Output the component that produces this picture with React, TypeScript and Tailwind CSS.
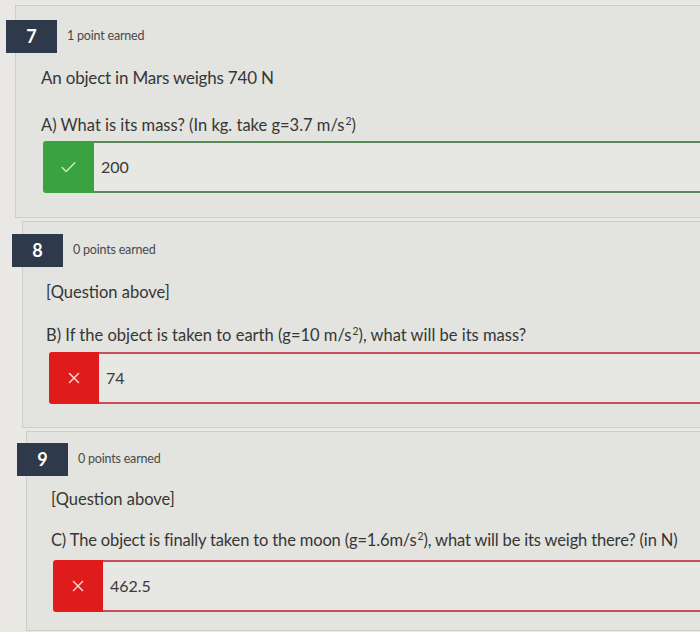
import { Check, X } from 'lucide-react';

type Result = 'correct' | 'wrong';

const font = { fontFamily: 'Lato, "Open Sans", sans-serif' };

function Answer({ result, value }: { result: Result; value: string }) {
  const ok = result === 'correct';
  return (
    <div className="flex h-[52px] -mr-[20px]">
      <div
        className={
          ok
            ? 'w-[51px] flex items-center justify-center rounded-l-[3px] bg-[#3aa23f]'
            : 'w-[50px] flex items-center justify-center rounded-l-[3px] bg-[#e01b1b]'
        }
      >
        {ok ? (
          <Check size={19} strokeWidth={1.75} className="text-[#cfeec9]" />
        ) : (
          <X size={18} strokeWidth={2} className="text-[#f6d6d4]" />
        )}
      </div>
      <div
        className={
          ok
            ? 'flex-1 flex items-center pl-[7px] border-y-2 border-[#5b8a5a] bg-[#e7e7e3] text-[16px] text-[#3a3a3a]'
            : 'flex-1 flex items-center pl-[7px] border-y-2 border-[#c5505a] bg-[#e7e7e3] text-[16px] text-[#3a3a3a]'
        }
      >
        {value}
      </div>
    </div>
  );
}

function Badge({ n, points }: { n: number; points: string }) {
  return (
    <div className="flex items-center">
      <div className="w-[51px] h-[33px] flex items-center justify-center bg-[#2e3a4b] text-white text-[18px] font-bold">
        {n}
      </div>
      <span className="ml-[10px] text-[12.5px] text-[#4a4a4a] tracking-[-0.2px]">{points}</span>
    </div>
  );
}

function Sup({ children }: { children: string }) {
  return <sup className="text-[10.5px] leading-none relative -top-[0.6em] ml-[1px]">{children}</sup>;
}

export default function App() {
  return (
    <div style={font} className="w-[700px] h-[632px] overflow-hidden bg-[#e9e8e4] text-[#363636]">
      {/* Question 7 */}
      <div className="mt-[5px] ml-[15px] border-t border-l border-b border-[#cdcdc9] bg-[#e3e3df] pt-[14px] pb-[24px]">
        <div className="-ml-[10px]">
          <Badge n={7} points="1 point earned" />
        </div>
        <div className="pl-[25px]">
          <p className="mt-[13px] text-[17px] leading-[24px] tracking-[-0.2px]">An object in Mars weighs 740 N</p>
          <p className="mt-[23px] text-[16.5px] leading-[24px] whitespace-nowrap">
            A) What is its mass? (In kg. take g=3.7 m/s<Sup>2</Sup>)
          </p>
          <div className="mt-[4px] ml-[2px]">
            <Answer result="correct" value="200" />
          </div>
        </div>
      </div>

      {/* Question 8 */}
      <div className="mt-[3px] ml-[22px] border-t border-l border-b border-[#cdcdc9] bg-[#e3e3df] pt-[12px] pb-[23px]">
        <div className="-ml-[11px]">
          <Badge n={8} points="0 points earned" />
        </div>
        <div className="pl-[23px]">
          <p className="mt-[13px] text-[16.5px] leading-[24px]">[Question above]</p>
          <p className="mt-[19px] text-[16.5px] leading-[24px] whitespace-nowrap">
            B) If the object is taken to earth (g=10 m/s<Sup>2</Sup>), what will be its mass?
          </p>
          <div className="mt-[5px] ml-[3px]">
            <Answer result="wrong" value="74" />
          </div>
        </div>
      </div>

      {/* Question 9 */}
      <div className="mt-[3px] ml-[26px] border-t border-l border-b border-[#cdcdc9] bg-[#e3e3df] pt-[11px] pb-[18px]">
        <div className="-ml-[10px]">
          <Badge n={9} points="0 points earned" />
        </div>
        <div className="pl-[24px]">
          <p className="mt-[11px] text-[16.5px] leading-[24px]">[Question above]</p>
          <p className="mt-[17px] text-[16.5px] leading-[24px] tracking-[-0.15px] whitespace-nowrap">
            C) The object is finally taken to the moon (g=1.6m/s<Sup>2</Sup>), what will be its weigh there? (in N)
          </p>
          <div className="mt-[8px] ml-[2px]">
            <Answer result="wrong" value="462.5" />
          </div>
        </div>
      </div>
    </div>
  );
}
